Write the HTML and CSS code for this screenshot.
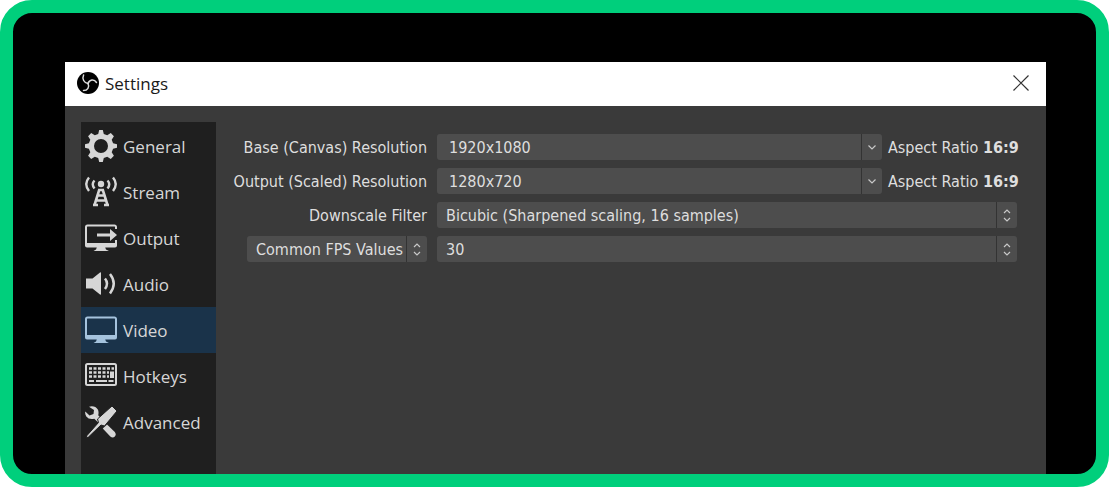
FILE: index.html
```html
<!DOCTYPE html>
<html lang="en">
<head>
  <meta charset="UTF-8" />
  <title>Settings</title>
  <link rel="stylesheet" href="styles.css">
</head>
<body>

<div class="frame">
  <div class="screen">
    <main class="window">

      <header class="titlebar">
        <svg class="logo" viewBox="0 0 22 22">
          <circle cx="11" cy="11" r="11" fill="#000" />
          <g fill="none" stroke="#ddd" stroke-linecap="round" stroke-width="1.5">
            <path d="M11 11.500C7 10.800 4.800 7 6.600 3" />
            <path d="M11 11.500C12.500 7.500 17 6.800 19.500 10.500" />
            <path d="M11 11.500C12.800 15 10.600 18.500 6.500 18.500" />
          </g>
        </svg>
        <h1>Settings</h1>
        <button class="close" aria-label="Close">
          <svg viewBox="0 0 16 16"><path d="M.5.5l15 15M15.5.5l-15 15" /></svg>
        </button>
      </header>

      <div class="content">
        <nav class="sidebar">
          <a href="#general">
            <svg viewBox="0 0 32 32">
              <path fill-rule="evenodd" d="M13.2 3.9L14.2 0h3.6l1 3.9 3.4 1.4 3.6-2.2 3.1 3.1-2.2 3.6 1.4 3.4 3.9 1v3.6l-3.9 1-1.4 3.4 2.2 3.6-3.1 3.1-3.6-2.2-3.4 1.4-1 3.9h-3.6l-1-3.9-3.4-1.4-3.6 2.2-3.1-3.1 2.2-3.6-1.4-3.4-3.9-1v-3.6l3.9-1 1.4-3.4-2.2-3.6 3.1-3.1 3.6 2.2zM16 9a7 7 0 1 0 0 14a7 7 0 1 0 0-14z" />
            </svg>
            <span>General</span>
          </a>
          <a href="#stream">
            <svg viewBox="0 0 32 32">
              <circle cx="16" cy="8" r="3.2" />
              <path class="line" stroke-width="2.4" d="M4 1.500Q-1.500 8 4 15M28 1.500Q33.500 8 28 15M9.500 4.500Q6 8 9.500 12.500M22.500 4.500Q26 8 22.500 12.500" />
              <path class="line" stroke-width="2.600" d="M14.200 14L9.500 29M17.800 14L22.500 29M13 14h6M12.500 19.500h7M11.500 24.500h9M8 29h5M19 29H24" />
            </svg>
            <span>Stream</span>
          </a>
          <a href="#output">
            <svg viewBox="0 0 32 32">
              <path class="line" stroke-width="2" d="M31 7V5a1.500 1.500 0 0 0-1.500-1.500h-27A1.500 1.500 0 0 0 1 5v17.500h30V18" />
              <path d="M0 21h32v2.500a2 2 0 0 1-2 2H2a2 2 0 0 1-2-2zM12 25h8l1 2.500 3 1.500H8.500l2.500-1.500zM12 11.500h13V7l7 6-7 6v-4.500H12z" />
            </svg>
            <span>Output</span>
          </a>
          <a href="#audio">
            <svg viewBox="0 0 32 32">
              <path d="M1 10.500h6.500L15 4.500q1-.5 1 .5v21q0 1-1 .5L7.500 20.500H1z" />
              <path class="line" stroke-width="2.500" d="M20 10.500q4 5 0 10.500M25 6q7.500 9.500 0 19.500" />
            </svg>
            <span>Audio</span>
          </a>
          <a href="#video" class="active">
            <svg viewBox="0 0 32 32">
              <path class="line" stroke-width="2" d="M1 21V5a1.500 1.500 0 0 1 1.500-1.500h27A1.500 1.500 0 0 1 31 5v16" />
              <path d="M0 21h32v2.500a2 2 0 0 1-2 2H2a2 2 0 0 1-2-2zM12 25h8l1 2.500 3 1.500H8.500l2.500-1.500z" />
            </svg>
            <span>Video</span>
          </a>
          <a href="#hotkeys">
            <svg viewBox="0 0 32 32">
              <rect class="line" stroke-width="2" x="1" y="4" width="30" height="21" rx="1.500" />
              <path class="line" stroke-width="2.500" stroke-dasharray="3 1.500" d="M4 8.500h25M4 12.500h20M4 16.500h20" />
              <path d="M4 20h5v2H4zM11 20h11v2H11zM23.500 20h5v2h-5zM25 11.500h4v6.500h-4z" />
            </svg>
            <span>Hotkeys</span>
          </a>
          <a href="#advanced">
            <svg viewBox="0 0 32 32">
              <path d="M4 .7q6-1.500 9 3 1 2.500.2 5.500l3.800 4-3.500 3.500-4.200-4Q4 14 1.300 10.500-.3 8 .3 5.500l4.200 4 4-1.500.5-4z" />
              <path d="M22 18.500l7.800 7.500q1.800 2.500 0 4.500-2 1.800-4.500 0L17.800 22.500z" />
              <path class="outlined" d="M27 0l5 5-12.500 15-3.500-1L3.500 31 1 32l1-2.500L13.500 16.500l-1-3.500z" />
            </svg>
            <span>Advanced</span>
          </a>
        </nav>

        <form class="video-form">
          <label for="base">Base (Canvas) Resolution</label>
          <div class="combo editable">
            <select id="base"><option>1920x1080</option></select>
            <span class="arrow"><svg viewBox="0 0 8 5"><path d="M.5.5L4 4 7.500.5" /></svg></span>
          </div>
          <p>Aspect Ratio <b>16:9</b></p>

          <label for="output">Output (Scaled) Resolution</label>
          <div class="combo editable">
            <select id="output"><option>1280x720</option></select>
            <span class="arrow"><svg viewBox="0 0 8 5"><path d="M.5.5L4 4 7.500.5" /></svg></span>
          </div>
          <p>Aspect Ratio <b>16:9</b></p>

          <label for="filter">Downscale Filter</label>
          <div class="combo wide">
            <select id="filter"><option>Bicubic (Sharpened scaling, 16 samples)</option></select>
            <span class="arrow"><svg class="updown" viewBox="0 0 8 13"><path d="M1 4l3-3 3 3M1 9l3 3 3-3" /></svg></span>
          </div>

          <div class="combo fps-type">
            <select aria-label="FPS type"><option>Common FPS Values</option></select>
            <span class="arrow"><svg class="updown" viewBox="0 0 8 13"><path d="M1 4l3-3 3 3M1 9l3 3 3-3" /></svg></span>
          </div>
          <div class="combo wide">
            <select aria-label="FPS"><option>30</option></select>
            <span class="arrow"><svg class="updown" viewBox="0 0 8 13"><path d="M1 4l3-3 3 3M1 9l3 3 3-3" /></svg></span>
          </div>
        </form>
      </div>

    </main>
  </div>
</div>

</body>
</html>
```
FILE: styles.css
```css
* {
  box-sizing: border-box;
}
body {
  margin: 0;
  background: #fff;
  font-family: "DejaVu Sans Condensed", "Noto Sans", sans-serif;
  color: #dedede;
}

/* Green frame around the black desktop */
.frame {
  height: 100vh;
  padding: 0 1px 1px 0;
}
.screen {
  height: 100%;
  display: flex;
  border: 13px solid #00cf7c;
  border-radius: 32px;
  background: #000;
  padding: 49px 50px 0 52px;
}
.window {
  flex: 1;
  display: flex;
  flex-direction: column;
  background: #3a3a3a;
}

.titlebar {
  height: 44px;
  display: flex;
  align-items: center;
  gap: 6px;
  padding: 0 17px 2px 12px;
  background: #fff;
  color: #1a1a1a;
}
.titlebar h1 {
  margin: 0;
  flex: 1;
  font-family: "Open Sans", sans-serif;
  font-size: 17px;
  font-weight: 400;
}
.logo {
  width: 22px;
  height: 22px;
}
.close {
  display: flex;
  padding: 0;
  border: none;
  background: none;
  cursor: pointer;
}
.close svg {
  width: 16px;
  height: 16px;
  fill: none;
  stroke: #333;
  stroke-width: 1.2;
}

.content {
  flex: 1;
  display: flex;
  gap: 17px;
  padding: 16px 29px 0 16px;
}
.sidebar {
  width: 135px;
  padding-top: 1px;
  background: #1f1f1f;
  font-family: "Open Sans", sans-serif;
}
.sidebar a {
  height: 46px;
  display: flex;
  align-items: center;
  gap: 6px;
  padding-left: 4px;
  color: #d6d6d6;
  font-size: 17px;
  text-decoration: none;
}
.sidebar span {
  padding-top: 1px;
}
.sidebar svg {
  width: 32px;
  height: 32px;
  flex: none;
  fill: #d6d6d6;
}
.sidebar .line {
  fill: none;
  stroke: #d6d6d6;
}
.sidebar .outlined {
  stroke: #1f1f1f;
  stroke-width: 1;
}
.sidebar .active {
  background: #1a334a;
}
.sidebar .active svg {
  fill: #a5c3dd;
}
.sidebar .active .line {
  stroke: #a5c3dd;
}

.video-form {
  flex: 1;
  display: grid;
  grid-template-columns: 194px 1fr 129px;
  grid-auto-rows: 26px;
  align-items: center;
  align-content: start;
  row-gap: 8px;
  padding-top: 12px;
  font-size: 16px;
}
.video-form label {
  text-align: right;
  white-space: nowrap;
}
.video-form p {
  margin: 0;
  white-space: nowrap;
}
.combo {
  position: relative;
  height: 26px;
  margin-left: 10px;
}
.editable {
  margin-right: 6px;
}
.wide {
  grid-column: 2 / 4;
}
.fps-type {
  margin-left: 14px;
}
.combo select {
  width: 100%;
  height: 100%;
  appearance: none;
  border: none;
  border-radius: 3px;
  padding: 0 30px 0 9px;
  background: #4d4d4d;
  color: #dedede;
  font: inherit;
}
.editable select {
  padding-left: 12px;
}
.combo.fps-type select {
  padding-right: 21px;
}
.arrow {
  position: absolute;
  top: 0;
  right: 0;
  bottom: 0;
  width: 21px;
  display: flex;
  align-items: center;
  justify-content: center;
  border-left: 1px solid #333;
  pointer-events: none;
}
.arrow svg {
  width: 8px;
  height: 5px;
  fill: none;
  stroke: #c8c8c8;
  stroke-width: 1.2;
}
.arrow .updown {
  height: 13px;
}
```
